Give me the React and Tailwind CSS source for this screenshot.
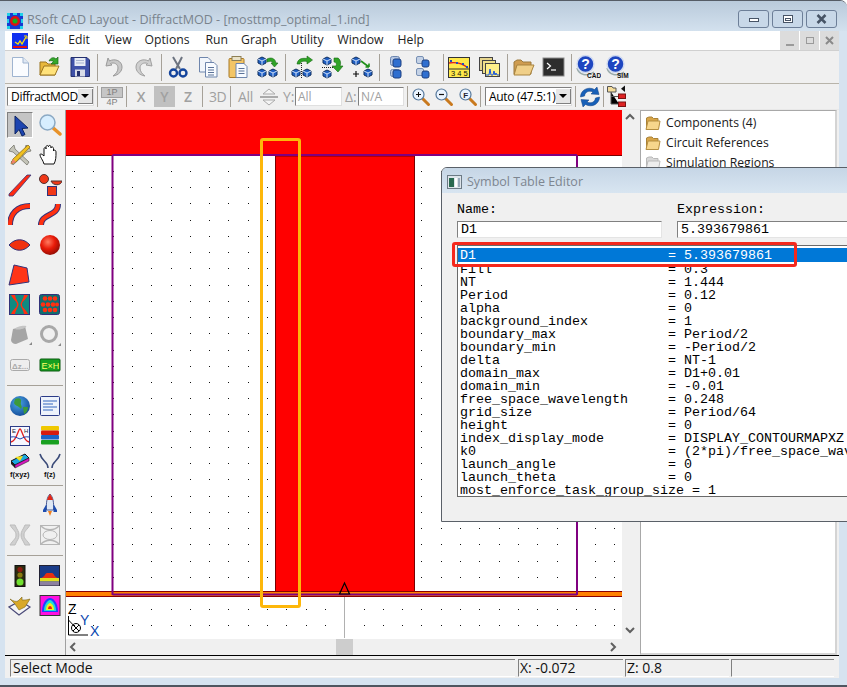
import React from "react";

const S = ({ w = 24, h = 24, children }) => (
  <svg width={w} height={h} viewBox={`0 0 ${w} ${h}`} className="block shrink-0">{children}</svg>
);

const Cube = ({ x, y, r = 4.6, c = "#1f5fc4" }) => (
  <g>
    <polygon points={`${x},${y - r} ${x + r},${y - r / 2} ${x + r},${y + r / 2} ${x},${y + r} ${x - r},${y + r / 2} ${x - r},${y - r / 2}`} fill={c} stroke="#12305f" strokeWidth="1" />
    <path d={`M${x - r} ${y - r / 2}L${x} ${y}L${x + r} ${y - r / 2}M${x} ${y}V${y + r}`} stroke="#cfe0f8" strokeWidth="1" fill="none" />
  </g>
);
const Sq = ({ x, y, s = 9, c = "#2f6fd0" }) => (
  <rect x={x} y={y} width={s} height={s} rx="2" fill={c} stroke="#1c3f80" />
);

const I = {
  New: () => <S><path d="M4.5 2.5H15L20.5 8V21.5H4.5Z" fill="#fafcff" stroke="#9fb4d0" /><path d="M15 2.5V8H20.5" fill="#dfe8f4" stroke="#9fb4d0" /></S>,
  Open: () => <S><path d="M2 20V7H8L10 9H17V20Z" fill="#e8b83c" stroke="#9a7420" /><path d="M2 20L6 11H21L17 20Z" fill="#ffe27a" stroke="#9a7420" /><path d="M11 6C13 2 16 2 18 4L20 2V9H13L15.5 6.5C14 5.5 13 5.5 11 6Z" fill="#35a82c" stroke="#1c6a18" strokeWidth=".7" /></S>,
  Save: () => <S><path d="M3 2.5H19L21.5 5V21.5H3Z" fill="#3f51a8" stroke="#25306e" /><rect x="6.5" y="3" width="11" height="8" fill="#e8ecf5" /><path d="M8 5.5H16M8 8H16" stroke="#a7b2cf" /><rect x="7" y="14.5" width="10" height="7" fill="#d8dce8" /><rect x="9" y="16" width="3" height="5" fill="#25306e" /></S>,
  Undo: () => <S><path d="M6 3L4 11L10 10L8.5 8.5C12 7 16 9 16 13C16 16 14 19 11 21C17 20 20 16 20 12C20 6 13 3 7.5 6Z" fill="#c8c8c8" stroke="#9a9a9a" /></S>,
  Redo: () => <S><path d="M18 3L20 11L14 10L15.5 8.5C12 7 8 9 8 13C8 16 10 19 13 21C7 20 4 16 4 12C4 6 11 3 16.5 6Z" fill="#cfcfcf" stroke="#a0a0a0" /></S>,
  Cut: () => <S><path d="M7 2L14 14M16 2L10 14" stroke="#6d7480" strokeWidth="2" /><circle cx="7.5" cy="18" r="3.5" fill="none" stroke="#14449c" strokeWidth="2.4" /><circle cx="17" cy="18" r="3.5" fill="none" stroke="#14449c" strokeWidth="2.4" /></S>,
  Copy: () => <S><path d="M3.5 2.5H12L15 5.5V17H3.5Z" fill="#f2f6fc" stroke="#6f86ad" /><path d="M9.5 7.5H18L21 10.5V22H9.5Z" fill="#f8fbff" stroke="#6f86ad" /><path d="M12 12.5H18M12 15H18M12 17.5H18M12 20H18" stroke="#5b7298" /></S>,
  Paste: () => <S><rect x="3" y="3.5" width="15" height="19" rx="1" fill="#f3c566" stroke="#a87a28" /><rect x="6" y="1.5" width="9" height="4" fill="#e9e2c8" stroke="#8d7f55" /><path d="M10 8.5H18L21 11.5V22.5H10Z" fill="#f8fbff" stroke="#6f86ad" /><path d="M12.5 13.5H18.5M12.5 16H18.5M12.5 18.5H18.5" stroke="#5b7298" /></S>,
  CopyCube: () => <S><Cube x={6} y={6} r={4} /><path d="M11 4C15 2 19 3 20 8L22 8L18.5 12L15 8L17 8C16 6 14 6 11 7Z" fill="#2fa326" stroke="#1a6a15" strokeWidth=".6" /><Cube x={6} y={18} r={4} /><Cube x={17} y={18} r={4} /></S>,
  CutCube: () => <S><path d="M7 9C8 3 13 3 17 3.5V1L22.5 5L17 9V6.5C13 6 11 6 10 9Z" fill="#2fa326" stroke="#1a6a15" strokeWidth=".6" /><Cube x={6} y={18} r={4} /><Cube x={17} y={18} r={4} /><path d="M11.5 8V23" stroke="#222" strokeDasharray="1 1" /></S>,
  MirrorCube: () => <S><Cube x={7} y={6} r={4} /><path d="M2 12.5H13" stroke="#222" strokeDasharray="1 1" /><Cube x={7} y={19} r={4} /><path d="M14 3H18C21 5 21 9 20 11H23L18 17L12 11H16C17 9 16 7 14 7Z" fill="#2fa326" stroke="#1a6a15" strokeWidth=".6" /></S>,
  AddCube: () => <S><Cube x={6} y={6} r={4} /><path d="M11 6L19 12M19 12V8.5M19 12H15.5" stroke="#1f8f1a" strokeWidth="1.6" fill="none" /><path d="M3 19H9M6 16V22" stroke="#111" strokeWidth="1.2" /><Cube x={18} y={18} r={4} /></S>,
  Stack1: () => <S w={16}><rect x="2.5" y="1.5" width="9" height="9" rx="2" fill="#b6c7e2" stroke="#6c86b0" /><Sq x={5} y={4} s={8} /><rect x="2.5" y="14.5" width="9" height="7" rx="2" fill="#b6c7e2" stroke="#6c86b0" /><Sq x={5} y={15} s={8} /></S>,
  Stack2: () => <S><rect x="2.5" y="1.5" width="7" height="7" rx="1.5" fill="#c4d2e6" stroke="#7890b4" /><Sq x={8} y={5} s={7} /><rect x="2.5" y="13.5" width="7" height="7" rx="1.5" fill="#c4d2e6" stroke="#7890b4" /><Sq x={8} y={16} s={7} /></S>,
  Graph345: () => (
    <S><rect x=".5" y="2.5" width="21" height="20" fill="#ffe94a" stroke="#333" /><path d="M1 8C8 7 14 8 20 13" stroke="#e02020" strokeWidth="1.3" fill="none" /><path d="M2 6H4M8 8H10M14 9H16M18 12H20" stroke="#2050c0" strokeWidth="2" /><path d="M1 14H21" stroke="#333" /><text x="3" y="21" fontSize="7.5" fontFamily="Liberation Sans" fill="#111">3 4 5</text></S>
  ),
  Graphs: () => (
    <S><rect x="1.5" y="2.5" width="13" height="13" fill="#e7d68e" stroke="#444" /><rect x="4.5" y="5.5" width="13" height="13" fill="#efe08a" stroke="#444" /><rect x="7.5" y="8.5" width="14" height="13" fill="#fff08a" stroke="#444" /><path d="M8 20H11L12 14L13 20H15L16 16L17 20L18 18L19 20H21" stroke="#1050e0" fill="none" /></S>
  ),
  Folder: () => <S><path d="M2 19V7L5 5H9L11 7H19V19Z" fill="#cf9c50" stroke="#9c7a3e" /><path d="M2 20L5 10H22L18 20Z" fill="#f0cf88" stroke="#a8833f" /></S>,
  Term: () => <S><rect x="1" y="3" width="21" height="18" fill="#2d2d2d" stroke="#8b8b8b" /><path d="M5 8L8.5 11L5 14" stroke="#fff" strokeWidth="1.2" fill="none" /><path d="M9 15H14" stroke="#fff" strokeWidth="1.2" /></S>,
  Help: ({ t }) => (
    <svg width="26" height="26" viewBox="0 0 26 26" className="block shrink-0"><path d="M2 14C4 21 12 23 19 18" stroke="#9aa" fill="none" strokeWidth="1.5" /><circle cx="10.5" cy="10" r="8.5" fill="#1e46c0" stroke="#d0daf0" strokeWidth="1.5" /><text x="6.2" y="15" fontSize="14" fontWeight="700" fontFamily="Liberation Sans" fill="#fff">?</text><text x="12" y="24" fontSize="6.5" fontWeight="700" fontFamily="Liberation Sans" fill="#111">{t}</text></svg>
  ),
  Zoom: ({ t }) => (
    <S w={20} h={20}><path d="M11 11L17.5 17.5" stroke="#c9791e" strokeWidth="3" strokeLinecap="round" /><circle cx="7.5" cy="7.5" r="5.5" fill="#eaf4ff" stroke="#55789c" strokeWidth="1.2" />{t === "+" && <path d="M5 7.5H10M7.5 5V10" stroke="#111" />}{t === "-" && <path d="M5 7.5H10" stroke="#111" strokeWidth="1.2" />}{t === "F" && <text x="5.2" y="10.5" fontSize="8" fontWeight="700" fontFamily="Liberation Sans" fill="#223">F</text>}</S>
  ),
  Refresh: () => (
    <S><path d="M2.5 12C2.5 5 10 1 16.5 4.5L19 2L21 9.5L13 9L15 7C11 5 7 7 6.5 11Z" fill="#1860b8" stroke="#0e3f80" strokeWidth=".5" /><path d="M21.5 12C21.5 19 14 23 7.5 19.5L5 22L3 14.5L11 15L9 17C13 19 17 17 17.5 13Z" fill="#1860b8" stroke="#0e3f80" strokeWidth=".5" /></S>
  ),
  Tree: () => (
    <S><path d="M1.5 1.5H6L7 3H10V7H1.5Z" fill="#f4dc9a" stroke="#555" /><path d="M19 0.5V7L15 3.75Z" fill="#111" /><path d="M5 7V19H13M5 11.5H13" stroke="#555" /><rect x="12.5" y="9" width="7" height="4.5" fill="#d22" stroke="#7a1212" /><rect x="12.5" y="17" width="7" height="4.5" fill="#d22" stroke="#7a1212" /></S>
  ),
  Arrow: () => <S><path d="M7 3V21L11 16.5L14 23L17 21.5L14 15.5L20 15Z" fill="#1c44b0" stroke="#0c2464" /></S>,
  Glass: () => <S><path d="M14 14L22 21" stroke="#e8922a" strokeWidth="3.5" strokeLinecap="round" /><circle cx="9.5" cy="9.5" r="7.5" fill="#d7eeff" stroke="#8ba9c4" strokeWidth="1.5" /></S>,
  Tools: () => <S><path d="M2 6L6 2L7 6L21 19L19 22L5 9L1 8ZM22 6L18 2L17 6L3 19L5 22L19 9L23 8Z" fill="#c4c4b8" stroke="#6a6a60" strokeWidth=".7" /><path d="M20 2L22 4L8 19L3 21L5 16Z" fill="#f0c020" stroke="#806010" strokeWidth=".7" /><path d="M3 21L5 16L8 19Z" fill="#f08070" /></S>,
  Hand: () => <S><path d="M6 21C5 17 2 14 2 12C2 10 4 11 6 13V6C6 4 8 4 8 6V4C8 2 10.5 2 10.5 4V3.5C10.5 2 13 2 13 4V5C13 3.5 15.5 3.5 15.5 5.5V8C16 6.5 18 7 18 9C18 14 18 17 16 21Z" fill="#fff" stroke="#111" /></S>,
  Line: () => <S><path d="M1 21L19 2H23L5 23H1Z" fill="#ff2a10" stroke="#32327a" strokeWidth=".8" /></S>,
  Shapes: () => <S><circle cx="6" cy="6" r="4.5" fill="#f03818" stroke="#503030" /><path d="M13 8H24C23 13 15 13 13 8Z" fill="#f03818" stroke="#503030" /><rect x="9.5" y="13.5" width="9" height="9" fill="#f03818" stroke="#32327a" /></S>,
  Arc: () => <S><path d="M2 22C2 11 9 3 22 3" fill="none" stroke="#32327a" strokeWidth="6" /><path d="M2 22C2 11 9 3 22 3" fill="none" stroke="#ff3010" strokeWidth="4" /></S>,
  SBend: () => <S><path d="M3 22C3 10 20 14 20 1" fill="none" stroke="#32327a" strokeWidth="6" /><path d="M3 22C3 10 20 14 20 1" fill="none" stroke="#ff3010" strokeWidth="4" /></S>,
  Lens: () => <S><path d="M1 12C7 5 16 5 22 12C16 19 7 19 1 12Z" fill="#f03010" stroke="#32327a" /></S>,
  Ball: () => <S><defs><radialGradient id="bg1" cx=".4" cy=".35" r=".7"><stop offset="0" stopColor="#ff7a60" /><stop offset=".5" stopColor="#e81a08" /><stop offset="1" stopColor="#8a0c04" /></radialGradient></defs><circle cx="12" cy="12" r="10" fill="url(#bg1)" /></S>,
  Poly: () => <S><path d="M6 2L19 5L21 19L1 22Z" fill="#ff3418" stroke="#32327a" /></S>,
  Coupler: () => <S><rect x="1.5" y="1.5" width="20" height="20" fill="#0f8a80" stroke="#32327a" /><path d="M3 2C6 8 9 8 9 11.5C9 15 6 15 3 21H7C8 16 10.5 14 10.5 11.5C10.5 9 8 7 7 2ZM20 2C17 8 14 8 14 11.5C14 15 17 15 20 21H16C15 16 12.5 14 12.5 11.5C12.5 9 15 7 16 2Z" fill="#ff3010" /></S>,
  Dots: () => <S><rect x="1.5" y="1.5" width="20" height="20" rx="2" fill="#0f6e70" stroke="#32327a" /><g fill="#ff3010"><circle cx="7" cy="5.5" r="2.3" /><circle cx="12" cy="5.5" r="2.3" /><circle cx="17" cy="5.5" r="2.3" /><circle cx="5" cy="11.5" r="2.3" /><circle cx="10" cy="11.5" r="2.3" /><circle cx="15" cy="11.5" r="2.3" /><circle cx="19" cy="11.5" r="2" /><circle cx="7" cy="17" r="2.3" /><circle cx="12" cy="17" r="2.3" /><circle cx="17" cy="17" r="2.3" /></g></S>,
  Cyl: () => <S><path d="M5 6L17 3L20 16L8 21C5 21 3 19 3 17Z" fill="#a5a5a5" /><path d="M7 6C7 4 16 2 18 3C20 4 12 8 7 6Z" fill="#c5c5c5" /><path d="M21 22H24V19Z" fill="#888" /></S>,
  Ring: () => <S><circle cx="11" cy="11" r="7.5" fill="none" stroke="#a8a8a8" strokeWidth="3" /><path d="M20 23H23V20Z" fill="#888" /></S>,
  Dz: () => <S><rect x="2.5" y="6.5" width="19" height="11" rx="2" fill="#eee" stroke="#aaa" /><text x="4" y="15.5" fontSize="8" fontWeight="700" fontFamily="Liberation Sans" fill="#aaa">Δz...</text></S>,
  Exh: () => <S><rect x="2" y="6" width="20" height="12" rx="1" fill="#16a020" stroke="#0a5a10" /><text x="3.6" y="15.5" fontSize="9" fontFamily="Liberation Sans" fill="#ffff66">E×H</text></S>,
  Globe: () => <S><defs><radialGradient id="bg2" cx=".4" cy=".35" r=".8"><stop offset="0" stopColor="#4aa8e8" /><stop offset="1" stopColor="#0c3c8c" /></radialGradient></defs><circle cx="12" cy="12" r="10" fill="url(#bg2)" /><path d="M7 5C11 3 14 5 13 8C12 11 15 12 13 15C11 12 7 12 6 9ZM15 13L20 13C20 16 18 20 16 20Z" fill="#3d9a3a" /></S>,
  Doc: () => <S><rect x="2.5" y="2.5" width="19" height="19" rx="1" fill="#eef3fb" stroke="#2c3c88" /><path d="M5 7H19M5 10H15M5 13H19M5 16H15" stroke="#3468c0" strokeWidth="1.2" /></S>,
  Chart: () => <S><rect x="2.5" y="2.5" width="19" height="19" fill="#f6f8ff" stroke="#2c3c88" /><path d="M3 18C9 17 10 5 12 5C14 5 15 17 21 18" stroke="#e02020" fill="none" strokeWidth="1.3" /><path d="M3 13C7 12 9 14 12 15C15 14 17 12 21 13" stroke="#2040b0" fill="none" /><text x="4" y="9" fontSize="6" fill="#223" fontFamily="Liberation Sans">E</text><text x="16" y="9" fontSize="6" fill="#223" fontFamily="Liberation Sans">H</text></S>,
  Layers: () => <S><rect x="3" y="2" width="18" height="4.5" rx="1" fill="#f0c800" /><rect x="3" y="6.5" width="18" height="4.5" rx="1" fill="#d81c10" /><rect x="3" y="11" width="18" height="4.5" rx="1" fill="#1c64c8" /><rect x="3" y="16" width="18" height="4.5" rx="1" fill="#18a020" /></S>,
  Fxyz: () => <S w={24} h={26}><path d="M3 8L17 1L21 5L7 12Z" fill="#18a8e0" stroke="#111" /><path d="M3 8L7 12V15L3 11Z" fill="#222" /><path d="M7 12L21 5V8L7 15Z" fill="#d818c0" stroke="#111" strokeWidth=".5" /><path d="M7 4L12 8L15 3Z" fill="#f0e020" /><text x="2" y="24" fontSize="7.5" fontWeight="700" fontFamily="Liberation Sans" fill="#111">f(xyz)</text></S>,
  Fz: () => <S w={24} h={26}><path d="M2 1C4 9 10 8 10 15M22 1C20 9 14 8 14 15" fill="none" stroke="#3a4a78" strokeWidth="1.6" /><text x="6" y="24" fontSize="7.5" fontWeight="700" fontFamily="Liberation Sans" fill="#111">f(z)</text></S>,
  Rocket: () => <S><path d="M12 1C15 4 16 9 15.5 17H8.5C8 9 9 4 12 1Z" fill="#dfe8f4" stroke="#4a5a90" /><path d="M12 1C13.5 3 14.5 5 15 7H9C9.5 5 10.5 3 12 1Z" fill="#e02818" /><path d="M8.5 11L5 17V19H8.5ZM15.5 11L19 17V19H15.5Z" fill="#1c4cb0" /><path d="M10 18H14L12 23Z" fill="#f08020" /></S>,
  CoupGrey: () => <S><path d="M2 2C5 7 8 8 8 12C8 16 5 17 2 22H7C9 17 11 16 11 12C11 8 9 7 7 2ZM22 2C19 7 16 8 16 12C16 16 19 17 22 22H17C15 17 13 16 13 12C13 8 15 7 17 2Z" fill="#d0d0d0" stroke="#bcbcbc" /></S>,
  RingGrey: () => <S><rect x="2.5" y="2.5" width="19" height="19" fill="none" stroke="#b5b5b5" /><path d="M3 3C8 8 16 8 21 3M3 21C8 16 16 16 21 21" fill="none" stroke="#b5b5b5" strokeWidth="1.5" /><ellipse cx="12" cy="12" rx="7" ry="4.5" fill="none" stroke="#b5b5b5" /></S>,
  Light: () => <S><rect x="7" y="1.5" width="10" height="21" fill="#2c2c10" stroke="#111" /><circle cx="12" cy="5.5" r="2.6" fill="#8a1c10" /><circle cx="12" cy="11" r="2.6" fill="#8a7a10" /><circle cx="12" cy="18" r="3.5" fill="#70e030" /></S>,
  Stackup: () => <S><rect x="1.5" y="1.5" width="20" height="20" fill="#1a3c88" stroke="#223" /><rect x="2" y="14" width="19" height="3.5" fill="#e0e020" /><rect x="2" y="17.5" width="19" height="4" fill="#8c80a0" /><path d="M3 14C7 13 7 9 9 9H14C16 9 16 13 20 14Z" fill="#e83010" /></S>,
  Mode: () => <S><path d="M1 13L11 21L22 13L12 7Z" fill="#f4f4f4" stroke="#4a4a78" strokeWidth="1.2" /><path d="M2 5C5 7 8 8 10 7L14 3L14 6C17 6 19 6 22 5L17 13L11 16L7 10Z" fill="#d8a828" stroke="#7a6418" strokeWidth=".6" /></S>,
  Contour: () => <S><rect x="2" y="1.5" width="20" height="20" fill="#ff10e0" stroke="#333" /><path d="M4 18C4 8 9 4 12 4C15 4 20 8 20 18Z" fill="#2040ff" /><path d="M6 17C6 10 10 6 12 6C14 6 18 10 18 17Z" fill="#20e0d0" /><path d="M8 16C8 11 11 9 12 9C13 9 16 11 16 16Z" fill="#f0f020" /><path d="M10 15C10 13 11 12 12 12C13 12 14 13 14 15Z" fill="#f02010" /></S>,
  Tbl: () => <svg width="15" height="14" viewBox="0 0 15 14" className="block"><rect x=".5" y=".5" width="14" height="13" fill="#dde4ea" stroke="#6c7a85" /><rect x="2" y="3" width="5" height="9" fill="#2a6a50" /><rect x="8" y="3" width="2" height="9" fill="#fff" /><rect x="11" y="3" width="2" height="9" fill="#9ab" /></svg>,
  App: () => <svg width="16" height="16" viewBox="0 0 16 16" className="block"><rect width="16" height="16" fill="#1838d0" /><g fill="#20d0e8"><path d="M0 0h3v3H0zM6 0h4v2H6zM13 0h3v3h-3zM0 13h3v3H0zM13 13h3v3h-3zM0 6h2v4H0zM14 6h2v4h-2z" /></g><circle cx="8" cy="8" r="5" fill="#e01010" /><circle cx="8" cy="8" r="2.5" fill="#10b020" /></svg>,
  Doc16: () => <svg width="16" height="16" viewBox="0 0 16 16" className="block"><rect width="16" height="16" fill="#1030f0" /><path d="M3 9L6 11L8 8L10 11L14 4" stroke="#ffe000" strokeWidth="1.3" fill="none" /><path d="M12 3H15V6" stroke="#ffe000" fill="none" /><path d="M1 14H15" stroke="#e01010" strokeWidth="2" /></svg>,
  TFolder: ({ g }) => <svg width="16" height="16" viewBox="0 0 16 16" className="block"><path d="M1.5 14V3L4 2H7L8.5 3.5H13V14Z" fill={g ? "#d8d8d8" : "#d8a548"} stroke={g ? "#b8b8b8" : "#a98238"} /><path d="M1 14.5L3 6H15L13.5 14.5Z" fill={g ? "#ededed" : "#f7d68c"} stroke={g ? "#bbb" : "#b58e40"} /></svg>,
};

const Sep = () => <div className="w-[4px] h-[27px] flex justify-center"><div className="w-px h-full bg-[#a6a198]" /></div>;
const Btn = ({ children }) => <div className="w-[30px] h-[26px] flex items-center justify-center">{children}</div>;

const Sep2 = ({ cls = "" }) => <div className={`w-px h-[21px] shrink-0 bg-[#a6a198] ${cls}`} />;
const Tx = ({ children, cls = "" }) => <div className={`font-['Open_Sans'] shrink-0 whitespace-nowrap text-[14px] text-[#a0a0a0] leading-none ${cls}`}>{children}</div>;

const Caret = () => (
  <div className="w-[15px] h-[15px] shrink-0 bg-[#e6e6e6] border-r border-b border-[#808080] flex items-center justify-center">
    <div className="w-0 h-0 border-l-[4px] border-r-[4px] border-t-[4px] border-l-transparent border-r-transparent border-t-black" />
  </div>
);

const Select = ({ w, children }) => (
  <div className={`${w} h-[19px] shrink-0 bg-white border border-t-[#808080] border-l-[#808080] border-b-[#dcdcdc] border-r-[#dcdcdc] flex items-center pl-[3px] justify-between pr-px font-['Open_Sans'] text-[12px] tracking-[-0.3px] text-black leading-none whitespace-nowrap`}>
    <span>{children}</span><Caret />
  </div>
);

const ToolRow = ({ a, b }) => (
  <div className="flex h-[30px] items-center">
    <div className="w-[30px] h-[30px] flex items-center justify-center">{a}</div>
    <div className="w-[30px] h-[30px] flex items-center justify-center">{b}</div>
  </div>
);

const HLine = ({ cls = "my-[5px]" }) => <div className={`h-px bg-[#a6a198] mx-[2px] ${cls}`} />;

const Canvas = () => {
  const dots = [];
  for (let i = 0; i < 29; i++) {
    for (let j = -14; j < 16; j++) {
      const x = Math.round(8 + i * 19.3);
      const y = Math.round(272 + j * 16.23);
      if (y > 46 && y < 527) dots.push(<rect key={`${i}_${j}`} x={x} y={y} width="1" height="1" fill="#111" />);
    }
  }
  return (
    <svg width="556" height="529" viewBox="0 0 556 529" className="block shrink-0">
      <rect width="556" height="529" fill="#fff" />
      {dots}
      <rect x="0" y="0" width="556" height="45.5" fill="#ff0000" />
      <path d="M0 45.5H556" stroke="#7a0000" />
      <rect x="209.5" y="46" width="139" height="436" fill="#ff0000" stroke="#7a0000" />
      <rect x="0" y="481" width="556" height="6" fill="#ff8000" />
      <path d="M0 481.5H556M0 486.5H556" stroke="#8a0000" />
      <path d="M46.5 484.5H511M46.5 45V485M511 45V485M46.5 45H511" fill="none" stroke="#800080" strokeWidth="2" />
      <path d="M278.5 487V528" stroke="#b0b0b0" />
      <path d="M278.5 473L273.5 484H283.5Z" fill="none" stroke="#000" strokeWidth="1.2" />
      <path d="M2.5 506V525H22" fill="none" stroke="#000" />
      <path d="M2.5 510L12 520" stroke="#000" />
      <circle cx="10" cy="518" r="4.5" fill="none" stroke="#000" />
      <path d="M7 515L13 521M13 515L7 521" stroke="#000" />
      <text x="2" y="504" fontSize="14" fontFamily="Liberation Sans" fill="#000">Z</text>
      <text x="14" y="515" fontSize="14" fontFamily="Liberation Sans" fill="#0a48b0">Y</text>
      <text x="24" y="526" fontSize="14" fontFamily="Liberation Sans" fill="#0a48b0">X</text>
    </svg>
  );
};

const Chev = ({ d }) => {
  const p = { up: "M1 6L5 2L9 6", down: "M1 2L5 6L9 2", left: "M6 1L2 5L6 9", right: "M2 1L6 5L2 9" }[d];
  return <svg width="10" height="10" viewBox="0 0 10 10" className="block"><path d={p} fill="none" stroke="#606060" strokeWidth="2" /></svg>;
};

const rows = [
  ["Fill", "0.3"], ["NT", "1.444"], ["Period", "0.12"], ["alpha", "0"], ["background_index", "1"],
  ["boundary_max", "Period/2"], ["boundary_min", "-Period/2"], ["delta", "NT-1"], ["domain_max", "D1+0.01"],
  ["domain_min", "-0.01"], ["free_space_wavelength", "0.248"], ["grid_size", "Period/64"], ["height", "0"],
  ["index_display_mode", "DISPLAY_CONTOURMAPXZ"], ["k0", "(2*pi)/free_space_wavelength"], ["launch_angle", "0"], ["launch_theta", "0"],
];

const Dialog = () => (
  <div className="absolute left-[441px] top-[167px] w-[420px] h-[355px] bg-[#f0f0f0] border border-[#5a6068] rounded-t-[6px] overflow-hidden">
    <div className="h-[25px] bg-gradient-to-b from-[#c6d6e6] to-[#d8e5f1] flex items-center pl-[5px] gap-[5px] pt-[3px]">
      <I.Tbl />
      <span className="font-['Open_Sans'] text-[12.5px] text-[#7d8690]">Symbol Table Editor</span>
    </div>
    <div className="pl-[15px] pt-[10px] font-['Liberation_Mono'] text-[13.33px] text-black">
      <div className="flex leading-[14px]">
        <div className="w-[220px] shrink-0">Name:</div>
        <div className="shrink-0">Expression:</div>
      </div>
      <div className="flex mt-[4px]">
        <div className="w-[205px] shrink-0 h-[17px] bg-white border border-t-[#808080] border-l-[#808080] border-b-[#e4e4e4] border-r-[#e4e4e4] pl-[3px] leading-[15px]">D1</div>
        <div className="w-[220px] shrink-0 h-[17px] ml-[15px] bg-white border border-t-[#808080] border-l-[#808080] border-b-[#e4e4e4] border-r-[#e4e4e4] pl-[3px] leading-[15px]">5.393679861</div>
      </div>
      <div className="mt-[7px] w-[420px] h-[252px] bg-white border border-[#6a6a6a] overflow-hidden whitespace-pre">
        <div className="h-[14px] mt-[2px] bg-[#0078d7] text-white flex leading-[15px] pl-[2px]">
          <span className="w-[208px] shrink-0">D1</span><span className="shrink-0">= 5.393679861</span>
        </div>
        {rows.map(([n, v]) => (
          <div key={n} className="h-[13px] flex leading-[15px] pl-[2px]">
            <span className="w-[208px] shrink-0">{n}</span><span className="shrink-0">= {v}</span>
          </div>
        ))}
        <div className="h-[13px] leading-[15px] pl-[2px]">most_enforce_task_group_size = 1</div>
      </div>
    </div>
  </div>
);

export default function App() {
  return (
    <div className="relative w-[847px] h-[687px] overflow-hidden bg-white">
      <div className="w-[847px] h-[687px] bg-[#d6e3f0] rounded-tr-[7px] border-t border-t-[#555c66] border-b-2 border-b-[#4f5660] flex flex-col">
        {/* title */}
        <div className="h-[30px] shrink-0 bg-gradient-to-b from-[#b9cadb] to-[#d3e1ee] flex items-center relative pl-[7px] pt-[9px] rounded-tr-[7px]">
          <I.App />
          <span className="ml-[4px] font-['Open_Sans'] text-[12.55px] text-[#79838d]">RSoft CAD Layout - DiffractMOD - [mosttmp_optimal_1.ind]</span>
          <div className="ml-auto mr-[10px] flex gap-[3px] -mt-[3px]">
            <div className="w-[31px] h-[18px] rounded-[3px] border border-[#6d7f98] bg-[#c8d8e8] flex items-center justify-center"><div className="w-[10px] h-[4px] mt-[2px] bg-white border border-[#475466]" /></div>
            <div className="w-[31px] h-[18px] rounded-[3px] border border-[#6d7f98] bg-[#c8d8e8] flex items-center justify-center"><div className="w-[10px] h-[8px] bg-white border border-[#475466] flex items-center justify-center"><div className="w-[6px] h-[3px] border border-[#475466]" /></div></div>
            <div className="w-[31px] h-[18px] rounded-[3px] border border-[#6d7f98] bg-[#c8d8e8] flex items-center justify-center"><svg width="11" height="10" viewBox="0 0 11 10"><path d="M1.5 1L9.5 9M9.5 1L1.5 9" stroke="#475466" strokeWidth="2.5" /></svg></div>
          </div>
        </div>
        {/* content */}
        <div className="ml-[5px] w-[834px] flex flex-col bg-[#f0f0f0]">
          {/* menu */}
          <div className="h-[19px] bg-white flex items-center relative font-['Open_Sans'] text-[12.2px] text-[#222] pl-[7px] shrink-0">
            <I.Doc16 />
            <span className="ml-[7px]">File</span>
            <span className="ml-[14px]">Edit</span>
            <span className="ml-[15px]">View</span>
            <span className="ml-[13px]">Options</span>
            <span className="ml-[16px]">Run</span>
            <span className="ml-[13px]">Graph</span>
            <span className="ml-[14px]">Utility</span>
            <span className="ml-[14px]">Window</span>
            <span className="ml-[14px]">Help</span>
            <div className="ml-auto flex h-[19px]">
              <div className="w-[19px] bg-[#dcdcdc] flex items-end justify-center pb-[4px]"><div className="w-[8px] h-[2px] bg-[#9a9a9a]" /></div>
              <div className="w-[19px] bg-[#dcdcdc] ml-px flex items-center justify-center"><div className="w-[8px] h-[7px] border border-[#9a9a9a]" /></div>
              <div className="w-[19px] bg-[#dcdcdc] ml-px flex items-center justify-center"><svg width="9" height="9" viewBox="0 0 9 9"><path d="M1 1L8 8M8 1L1 8" stroke="#8a8a8a" strokeWidth="2" /></svg></div>
            </div>
          </div>
          {/* toolbar 1 */}
          <div className="h-[34px] shrink-0 border-t border-t-[#d0d0d0] border-b border-b-[#b8b4aa] flex items-center">
            <Btn><I.New /></Btn><Btn><I.Open /></Btn><Btn><I.Save /></Btn><Sep />
            <Btn><I.Undo /></Btn><Btn><I.Redo /></Btn><Sep />
            <Btn><I.Cut /></Btn><Btn><I.Copy /></Btn><Btn><I.Paste /></Btn><Btn><I.CopyCube /></Btn><Sep />
            <Btn><I.CutCube /></Btn><Btn><I.MirrorCube /></Btn><Btn><I.AddCube /></Btn><Sep />
            <Btn><I.Stack1 /></Btn><Btn><I.Stack2 /></Btn><Sep />
            <Btn><I.Graph345 /></Btn><Btn><I.Graphs /></Btn><Sep />
            <Btn><I.Folder /></Btn><Btn><I.Term /></Btn><Sep />
            <Btn><I.Help t="CAD" /></Btn><Btn><I.Help t="SIM" /></Btn>
          </div>
          {/* toolbar 2 */}
          <div className="h-[26px] shrink-0 flex items-center pl-[2px] border-b border-b-[#e8e8e8]">
            <Select w="w-[87px]">DiffractMOD</Select>
            <Sep2 cls="ml-[3px]" />
            <div className="ml-[3px] w-[22px] h-[19px] shrink-0 flex flex-col font-['Liberation_Sans'] text-[9px] text-[#808080] text-center leading-[9px]">
              <div className="bg-[#c6c6c6] border border-[#a0a0a0]">1P</div>
              <div>4P</div>
            </div>
            <Sep2 cls="ml-[3px]" />
            <Tx cls="ml-[8px] w-[12px] text-center font-semibold">X</Tx>
            <div className="ml-[7px] w-[21px] h-[21px] shrink-0 bg-[#c0c0c0] flex items-center justify-center"><Tx cls="font-semibold text-[#909090]">Y</Tx></div>
            <Tx cls="ml-[7px] w-[12px] text-center font-semibold">Z</Tx>
            <Sep2 cls="ml-[8px]" />
            <Tx cls="ml-[6px] w-[16px] text-[12px] tracking-[-0.6px]">3D</Tx>
            <Sep2 cls="ml-[5px]" />
            <Tx cls="ml-[7px] w-[14px] text-[12px] tracking-[-0.3px]">All</Tx>
            <svg width="18" height="20" viewBox="0 0 18 20" className="block shrink-0 ml-[8px]"><path d="M0 10H18" stroke="#aaa" strokeWidth="2" /><path d="M3 7L9 2L15 7Z" fill="#f4f4f4" stroke="#aaa" /><path d="M3 13L9 18L15 13Z" fill="#f4f4f4" stroke="#aaa" /></svg>
            <Tx cls="ml-[5px] w-[12px] text-[12px] text-[#8a8a8a]">Y:</Tx>
            <div className="w-[47px] h-[19px] shrink-0 bg-white border border-t-[#808080] border-l-[#808080] border-b-[#e0e0e0] border-r-[#e0e0e0] pl-[2px] font-['Open_Sans'] text-[12px] text-[#a0a0a0] leading-[17px]">All</div>
            <Tx cls="ml-[3px] w-[13px] text-[12px] text-[#8a8a8a]">Δ:</Tx>
            <div className="w-[46px] h-[19px] shrink-0 bg-white border border-t-[#808080] border-l-[#808080] border-b-[#e0e0e0] border-r-[#e0e0e0] pl-[2px] font-['Open_Sans'] text-[12px] text-[#a0a0a0] leading-[17px]">N/A</div>
            <Sep2 cls="ml-[3px]" />
            <div className="ml-[3px]"><I.Zoom t="+" /></div>
            <div className="ml-[3px]"><I.Zoom t="-" /></div>
            <div className="ml-[4px]"><I.Zoom t="F" /></div>
            <Sep2 cls="ml-[2px]" />
            <div className="ml-[4px]"><Select w="w-[87px]">Auto (47.5:1)</Select></div>
            <Sep2 cls="ml-[3px]" />
            <div className="ml-[2px]"><I.Refresh /></div>
            <Sep2 cls="ml-[1px]" />
            <div className="ml-[2px]"><I.Tree /></div>
          </div>
          {/* main */}
          <div className="h-[546px] shrink-0 flex border-b border-b-black">
            <div className="w-[61px] shrink-0 border-r border-r-[#a0a0a0]">
              <ToolRow a={<div className="w-[26px] h-[26px] bg-[#c4c4c4] border border-t-[#808080] border-l-[#808080] border-b-white border-r-white flex items-center justify-center"><I.Arrow /></div>} b={<I.Glass />} />
              <ToolRow a={<I.Tools />} b={<I.Hand />} />
              <ToolRow a={<I.Line />} b={<I.Shapes />} />
              <ToolRow a={<I.Arc />} b={<I.SBend />} />
              <ToolRow a={<I.Lens />} b={<I.Ball />} />
              <ToolRow a={<I.Poly />} b={<span />} />
              <ToolRow a={<I.Coupler />} b={<I.Dots />} />
              <ToolRow a={<I.Cyl />} b={<I.Ring />} />
              <ToolRow a={<I.Dz />} b={<I.Exh />} />
              <HLine />
              <ToolRow a={<I.Globe />} b={<I.Doc />} />
              <ToolRow a={<I.Chart />} b={<I.Layers />} />
              <ToolRow a={<I.Fxyz />} b={<I.Fz />} />
              <HLine cls="my-[4px]" />
              <ToolRow a={<span />} b={<I.Rocket />} />
              <ToolRow a={<I.CoupGrey />} b={<I.RingGrey />} />
              <HLine />
              <ToolRow a={<I.Light />} b={<I.Stackup />} />
              <ToolRow a={<I.Mode />} b={<I.Contour />} />
            </div>
            <div className="w-[572px] shrink-0 flex flex-col">
              <div className="flex h-[529px]">
                <Canvas />
                <div className="w-[16px] flex flex-col items-center justify-between py-[3px]"><Chev d="up" /><Chev d="down" /></div>
              </div>
              <div className="h-[16px] relative flex items-center justify-between px-[3px]">
                <Chev d="left" />
                <div className="absolute left-[270px] top-0 w-[17px] h-[16px] bg-[#cdcdcd]" />
                <div className="mr-[16px]"><Chev d="right" /></div>
              </div>
            </div>
            <div className="ml-[2px] w-[197px] shrink-0 bg-white border-t border-l border-[#a8a8a8] border-r-2 border-r-[#d4d4d4] border-b-2 border-b-[#d4d4d4] pt-[2px] pl-[4px] font-['Open_Sans'] text-[12.2px] text-[#1a1a1a]">
              <div className="flex items-center h-[20px] gap-[5px]"><I.TFolder /><span>Components (4)</span></div>
              <div className="flex items-center h-[20px] gap-[5px]"><I.TFolder /><span>Circuit References</span></div>
              <div className="flex items-center h-[20px] gap-[5px]"><I.TFolder g /><span>Simulation Regions</span></div>
            </div>
          </div>
          {/* status */}
          <div className="h-[22px] shrink-0 flex items-center gap-[2px] pl-[5px] pt-[1px] font-['Open_Sans'] text-[14px] text-[#111]">
            <div className="w-[505px] shrink-0 h-[18px] border-t border-l border-[#808080] border-b border-b-white leading-[16px] pl-[2px]">Select Mode</div>
            <div className="ml-[1px] w-[105px] shrink-0 h-[18px] border-t border-l border-[#808080] border-b border-b-white leading-[16px] pl-[1px]">X: -0.072</div>
            <div className="w-[104px] shrink-0 h-[18px] border-t border-l border-[#808080] border-b border-b-white leading-[16px] pl-[1px]">Z: 0.8</div>
            <div className="w-[103px] shrink-0 h-[18px] border-t border-l border-[#808080] border-b border-b-white" />
          </div>
        </div>
      </div>
      <Dialog />
      {/* annotations */}
      <div className="absolute left-[260px] top-[138px] w-[41px] h-[470px] border-[3px] border-[#fdb70a] rounded-[3px]" />
      <div className="absolute left-[452px] top-[242px] w-[345px] h-[25px] border-[3px] border-[#f5281c] rounded-[3px]" />
    </div>
  );
}
